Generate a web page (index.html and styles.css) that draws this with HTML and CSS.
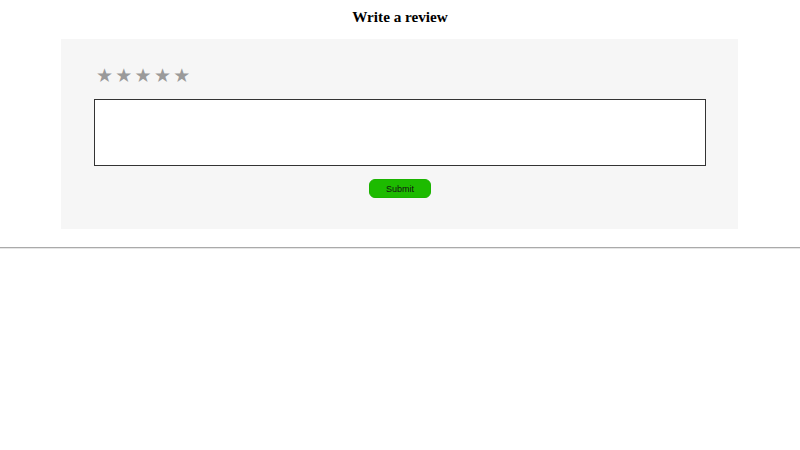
FILE: index.html
```html
<!DOCTYPE html>
<html>
<head>
<meta charset="utf-8">
<link rel="stylesheet" href="styles.css">
</head>
<body>
<h3 class="title">Write a review</h3>
<div class="panel">
  <div class="stars"><span class="star">★</span><span class="star">★</span><span class="star">★</span><span class="star">★</span><span class="star">★</span></div>
  <textarea class="review"></textarea>
  <div class="actions"><button class="submit">Submit</button></div>
</div>
<hr class="divider">
</body>
</html>
```
FILE: styles.css
```css
html, body { margin: 0; padding: 0; background: #fff; }
body { font-family: "Liberation Serif", serif; }
.title {
  margin: 0;
  padding-top: 7px;
  height: 39px;
  box-sizing: border-box;
  text-align: center;
  font-size: 15.2px;
  line-height: 20px;
  font-weight: bold;
  color: #000;
}
.panel {
  width: 677px;
  margin: 0 0 0 61px;
  height: 190px;
  box-sizing: border-box;
  background: #f6f6f6;
  padding: 25px 32px 0 33px;
}
.stars {
  display: flex;
  height: 22px;
  margin-left: 2px;
  margin-bottom: 13px;
}
.star {
  display: block;
  width: 19.3px;
  font-family: "DejaVu Sans", sans-serif;
  font-size: 19px;
  line-height: 22px;
  color: #9a9a9a;
}
.review {
  display: block;
  width: 612px;
  height: 67px;
  box-sizing: border-box;
  margin: 0;
  border: 1px solid #333;
  background: #fff;
  resize: none;
  padding: 2px;
}
.actions {
  display: flex;
  justify-content: center;
  margin-top: 13px;
}
.submit {
  width: 62px;
  height: 19px;
  box-sizing: border-box;
  border: 1px solid #1bb300;
  border-radius: 6px;
  background: #1dbb00;
  color: #111;
  font-family: "Liberation Sans", sans-serif;
  font-size: 9px;
  padding: 0;
}
.divider {
  margin: 18px 0 0 0;
  border: none;
  border-top: 1px solid #aaa;
  border-bottom: 1px solid #e6e6e6;
  height: 0;
}
```
